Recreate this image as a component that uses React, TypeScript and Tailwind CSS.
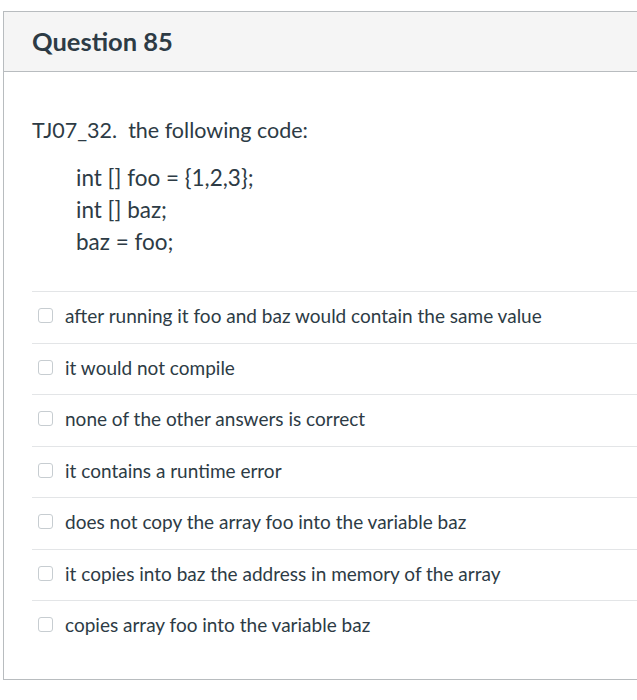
import React from "react";

const answers = [
  "after running it foo and baz would contain the same value",
  "it would not compile",
  "none of the other answers is correct",
  "it contains a runtime error",
  "does not copy the array foo into the variable baz",
  "it copies into baz the address in memory of the array",
  "copies array foo into the variable baz",
];

const codeLines = ["int [] foo = {1,2,3};", "int [] baz;", "baz = foo;"];

function AnswerRow({ text }: { text: string }) {
  return (
    <div className="flex h-[51.5px] items-center border-t border-[#e3e5e7] pb-[3px]">
      <span className="ml-[6px] mr-[12px] h-[15px] w-[15px] rounded-[3px] border border-[#c7cdd1] bg-white" />
      <span className="text-[19px] leading-[27px]">{text}</span>
    </div>
  );
}

export default function App() {
  return (
    <div className="min-h-[700px] bg-white pt-[11px] pl-[3px] font-['Lato','Noto_Sans',sans-serif] text-[#2d3b45]">
      <div className="w-[640px] border border-[#b8bcbf]">
        <div className="flex h-[60px] items-center border-b border-[#b8bcbf] bg-[#f5f5f5] pl-[28px]">
          <h2 className="text-[25.5px] font-bold leading-none text-[#2d3b45]">Question 85</h2>
        </div>
        <div className="pl-[28px] pt-[43px] pb-[27px]">
          <p className="text-[21.5px] leading-[30px]">TJ07_32.&nbsp; the following code:</p>
          <div className="mt-[17px] pl-[44px] text-[22.5px] leading-[32px]">
            {codeLines.map((l) => (
              <div key={l}>{l}</div>
            ))}
          </div>
          <div className="mt-[33px]">
            {answers.map((a) => (
              <AnswerRow key={a} text={a} />
            ))}
          </div>
        </div>
      </div>
    </div>
  );
}
